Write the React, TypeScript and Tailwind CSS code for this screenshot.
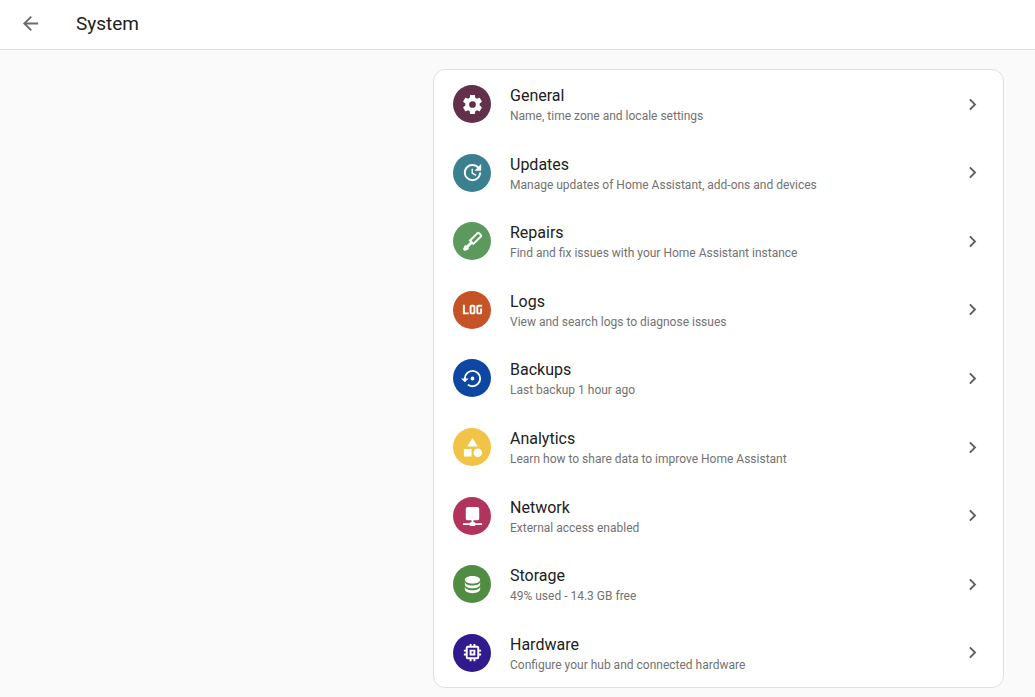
interface SettingsItem {
  title: string;
  detail: string;
  color: string;
  icon: string;
}

const items: SettingsItem[] = [
  {
    title: "General",
    detail: "Name, time zone and locale settings",
    color: "bg-[#63304a]",
    icon: "M12,15.5A3.5,3.5 0 0,1 8.5,12A3.5,3.5 0 0,1 12,8.5A3.5,3.5 0 0,1 15.5,12A3.5,3.5 0 0,1 12,15.5M19.43,12.97C19.47,12.65 19.5,12.33 19.5,12C19.5,11.67 19.47,11.34 19.43,11L21.54,9.37C21.73,9.22 21.78,8.95 21.66,8.73L19.66,5.27C19.54,5.05 19.27,4.96 19.05,5.05L16.56,6.05C16.04,5.66 15.5,5.32 14.87,5.07L14.5,2.42C14.46,2.18 14.25,2 14,2H10C9.75,2 9.54,2.18 9.5,2.42L9.13,5.07C8.5,5.32 7.96,5.66 7.44,6.05L4.95,5.05C4.73,4.96 4.46,5.05 4.34,5.27L2.34,8.73C2.21,8.95 2.27,9.22 2.46,9.37L4.57,11C4.53,11.34 4.5,11.67 4.5,12C4.5,12.33 4.53,12.65 4.57,12.97L2.46,14.63C2.27,14.78 2.21,15.05 2.34,15.27L4.34,18.73C4.46,18.95 4.73,19.03 4.95,18.95L7.44,17.94C7.96,18.34 8.5,18.68 9.13,18.93L9.5,21.58C9.54,21.82 9.75,22 10,22H14C14.25,22 14.46,21.82 14.5,21.58L14.87,18.93C15.5,18.67 16.04,18.34 16.56,17.94L19.05,18.95C19.27,19.03 19.54,18.95 19.66,18.73L21.66,15.27C21.78,15.05 21.73,14.78 21.54,14.63L19.43,12.97Z",
  },
  {
    title: "Updates",
    detail: "Manage updates of Home Assistant, add-ons and devices",
    color: "bg-[#3b808e]",
    icon: "M21,10.12H14.22L16.96,7.3C14.23,4.6 9.81,4.5 7.08,7.2C4.35,9.91 4.35,14.28 7.08,17C9.81,19.7 14.23,19.7 16.96,17C18.32,15.65 19,14.08 19,12.1H21C21,14.08 20.12,16.65 18.36,18.39C14.85,21.87 9.15,21.87 5.64,18.39C2.14,14.92 2.11,9.28 5.62,5.81C9.13,2.34 14.76,2.34 18.27,5.81L21,3V10.12M12.5,8V12.25L16,14.33L15.28,15.54L11,13V8H12.5Z",
  },
  {
    title: "Repairs",
    detail: "Find and fix issues with your Home Assistant instance",
    color: "bg-[#5c995c]",
    icon: "M18,1.83C17.5,1.83 17,2 16.59,2.41C13.72,5.28 8,11 8,11L9.5,12.5L6,16H4L2,20L4,22L8,20V18L11.5,14.5L13,16C13,16 18.72,10.28 21.59,7.41C22.21,6.5 22.37,5.37 21.59,4.59L19.41,2.41C19,2 18.5,1.83 18,1.83M18,4L20,6L13,13L11,11L18,4Z",
  },
  {
    title: "Logs",
    detail: "View and search logs to diagnose issues",
    color: "bg-[#c65326]",
    icon: "M18 7C16.9 7 16 7.9 16 9V15C16 16.1 16.9 17 18 17H20C21.1 17 22 16.1 22 15V11H20V15H18V9H22V7H18M2 7V17H8V15H4V7H2M11 7C9.9 7 9 7.9 9 9V15C9 16.1 9.9 17 11 17H13C14.1 17 15 16.1 15 15V9C15 7.9 14.1 7 13 7H11M11 9H13V15H11V9Z",
  },
  {
    title: "Backups",
    detail: "Last backup 1 hour ago",
    color: "bg-[#0d47a1]",
    icon: "M12,3A9,9 0 0,0 3,12H0L4,16L8,12H5A7,7 0 0,1 12,5A7,7 0 0,1 19,12A7,7 0 0,1 12,19C10.5,19 9.09,18.5 7.94,17.7L6.5,19.14C8.04,20.3 9.94,21 12,21A9,9 0 0,0 21,12A9,9 0 0,0 12,3M14,12A2,2 0 0,0 12,10A2,2 0 0,0 10,12A2,2 0 0,0 12,14A2,2 0 0,0 14,12Z",
  },
  {
    title: "Analytics",
    detail: "Learn how to share data to improve Home Assistant",
    color: "bg-[#f1c447]",
    icon: "M11,13.5V21.5H3V13.5H11M12,2L17.5,11H6.5L12,2M17.5,13C20,13 22,15 22,17.5C22,20 20,22 17.5,22C15,22 13,20 13,17.5C13,15 15,13 17.5,13Z",
  },
  {
    title: "Network",
    detail: "External access enabled",
    color: "bg-[#b1345c]",
    icon: "M17,3A2,2 0 0,1 19,5V15A2,2 0 0,1 17,17H13V19H14A1,1 0 0,1 15,20H22V22H15A1,1 0 0,1 14,23H10A1,1 0 0,1 9,22H2V20H9A1,1 0 0,1 10,19H11V17H7A2,2 0 0,1 5,15V5A2,2 0 0,1 7,3H17Z",
  },
  {
    title: "Storage",
    detail: "49% used - 14.3 GB free",
    color: "bg-[#518c43]",
    icon: "M12,3C7.58,3 4,4.79 4,7C4,9.21 7.58,11 12,11C16.42,11 20,9.21 20,7C20,4.79 16.42,3 12,3M4,9V12C4,14.21 7.58,16 12,16C16.42,16 20,14.21 20,12V9C20,11.21 16.42,13 12,13C7.58,13 4,11.21 4,9M4,14V17C4,19.21 7.58,21 12,21C16.42,21 20,19.21 20,17V14C20,16.21 16.42,18 12,18C7.58,18 4,16.21 4,14Z",
  },
  {
    title: "Hardware",
    detail: "Configure your hub and connected hardware",
    color: "bg-[#301a8e]",
    icon: "M17,17H7V7H17M21,11V9H19V7C19,5.89 18.1,5 17,5H15V3H13V5H11V3H9V5H7C5.89,5 5,5.89 5,7V9H3V11H5V13H3V15H5V17A2,2 0 0,0 7,19H9V21H11V19H13V21H15V19H17A2,2 0 0,0 19,17V15H21V13H19V11M13,13H11V11H13M15,9H9V15H15V9Z",
  },
];

function Icon({ path, className }: { path: string; className: string }) {
  return (
    <svg viewBox="0 0 24 24" aria-hidden="true" className={className}>
      <path d={path} fill="currentColor" />
    </svg>
  );
}

function SettingsRow({ item }: { item: SettingsItem }) {
  return (
    <li className="flex">
      <a href={"#" + item.title.toLowerCase()} className="flex flex-1 items-center pr-[19px] pl-[19px]">
        <span className={`flex size-[38px] shrink-0 items-center justify-center rounded-full text-white ${item.color}`}>
          <Icon path={item.icon} className="size-[23px]" />
        </span>
        <span className="ml-[19px] flex flex-1 flex-col pt-1">
          <span className="text-base leading-5 text-[#212121]">{item.title}</span>
          <span className="text-xs leading-5 text-[#727272]">{item.detail}</span>
        </span>
        <Icon
          path="M8.59,16.58L13.17,12L8.59,7.41L10,6L16,12L10,18L8.59,16.58Z"
          className="size-[23px] shrink-0 text-[#5f5f5f]"
        />
      </a>
    </li>
  );
}

export default function App() {
  return (
    <div className="min-h-screen bg-[#fafafa] font-['Roboto',sans-serif]">
      <header className="flex h-[50px] items-center border-b border-[#e0e0e0] bg-white pb-0.5 pl-[19px]">
        <button type="button" aria-label="Back" className="text-[#6b6b6b]">
          <Icon
            path="M20,11V13H8L13.5,18.5L12.08,19.92L4.16,12L12.08,4.08L13.5,5.5L8,11H20Z"
            className="size-[23px]"
          />
        </button>
        <h1 className="ml-[34px] text-[19px] leading-6 text-[#212121]">System</h1>
      </header>
      <main className="flex justify-end pt-[19px] pr-[31px] pb-[9px]">
        <ul className="grid min-h-[619px] w-full max-w-[571px] auto-rows-fr rounded-xl border border-[#e0e0e0] bg-white">
          {items.map((item) => (
            <SettingsRow key={item.title} item={item} />
          ))}
        </ul>
      </main>
    </div>
  );
}
